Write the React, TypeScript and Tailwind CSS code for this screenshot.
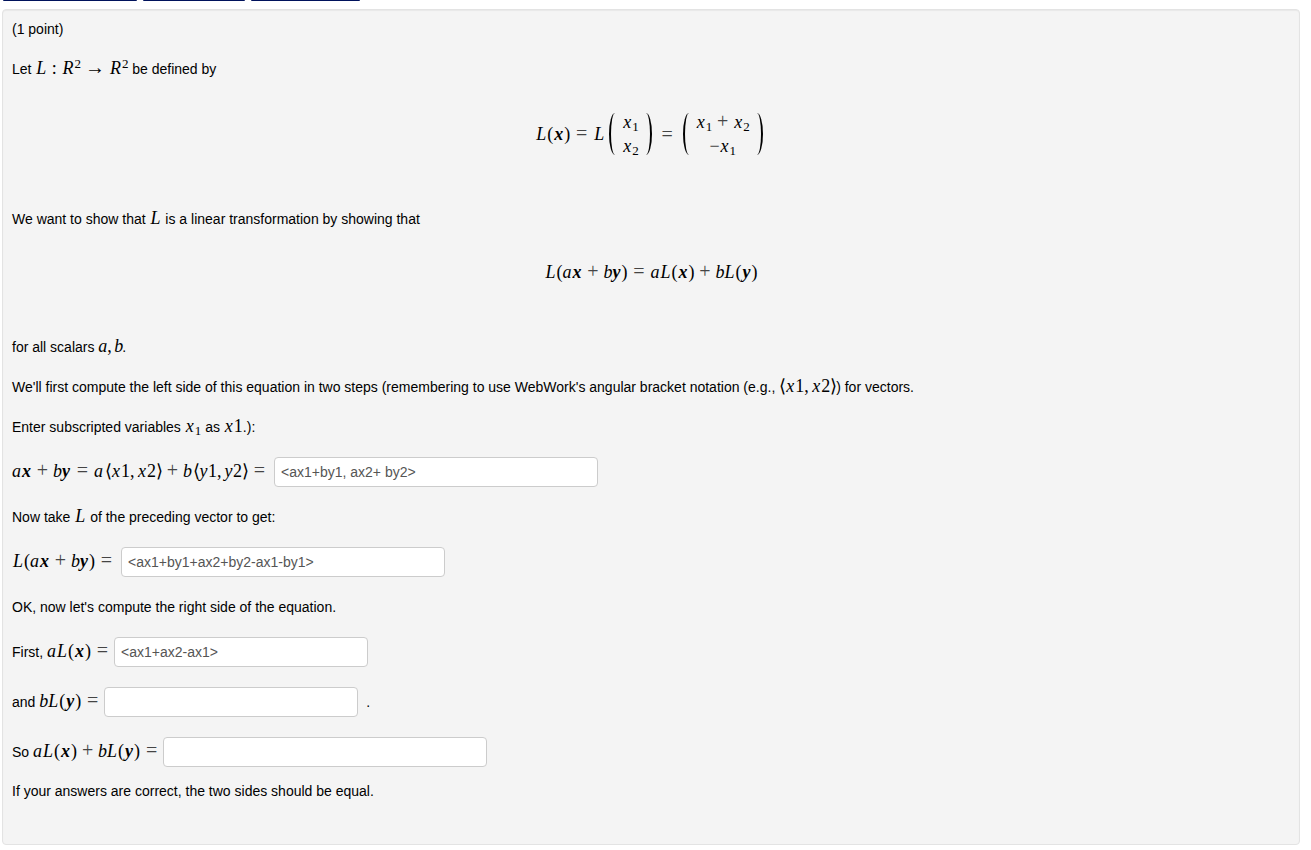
import { useState } from 'react';
import type { ReactNode } from 'react';

// Advance width of each letter, so formulas get textbook spacing
const LETTER: Record<string, string> = {
  L: 'w-3',
  R: 'w-[13px]',
  x: 'w-2.5',
  y: 'w-[9px]',
  a: 'w-[9px]',
  b: 'w-2',
};

const BOLD: Record<string, string> = {
  x: 'w-[11px]',
  y: 'w-2.5',
};

function Math({ children }: { children: ReactNode }) {
  return (
    <span className="font-['Liberation_Serif',serif] text-[18px] leading-0 whitespace-nowrap">{children}</span>
  );
}

function V({ children }: { children: string }) {
  return <i className={`inline-block text-center ${LETTER[children]}`}>{children}</i>;
}

function B({ children }: { children: string }) {
  return <b className={`inline-block text-center italic ${BOLD[children]}`}>{children}</b>;
}

function Op({ children }: { children: string }) {
  return <span className="inline-block w-[21px] text-center text-[20px] text-[#444]">{children}</span>;
}

function Eq() {
  return <span className="inline-block w-[23px] text-center text-[20px] text-[#444]">=</span>;
}

function Sub({ children }: { children: string }) {
  return <sub className="text-[13px]">{children}</sub>;
}

function Comma() {
  return <span className="inline-block w-[7px]">,</span>;
}

function Thin() {
  return <span className="inline-block w-0.5" />;
}

function Angle({ name }: { name: string }) {
  return (
    <>
      <span className="inline-flex w-1.5 justify-center">⟨</span>
      <V>{name}</V>1<Comma /><V>{name}</V>2
      <span className="inline-flex w-1.5 justify-center">⟩</span>
    </>
  );
}

// Column vector between tall delimiters
function Vector({ top, bottom }: { top: ReactNode; bottom: ReactNode }) {
  return (
    <span className="mx-1 flex items-center gap-px">
      <span className="h-[42px] w-3 rounded-l-[100%] border-l-2 border-black" />
      <span className="flex flex-col text-center leading-6">
        <span>{top}</span>
        <span>{bottom}</span>
      </span>
      <span className="h-[42px] w-3 rounded-r-[100%] border-r-2 border-black" />
    </span>
  );
}

interface AnswerProps {
  id: string;
  label: ReactNode;
  initial?: string;
  short?: boolean;
  spaced?: boolean;
  after?: string;
}

function Answer({ id, label, initial = '', short, spaced, after }: AnswerProps) {
  const [value, setValue] = useState(initial);
  return (
    <div className="flex items-center">
      <label htmlFor={id} className={spaced ? 'mr-[3px]' : ''}>{label}</label>
      <input
        id={id}
        type="text"
        value={value}
        onChange={e => setValue(e.target.value)}
        className={`h-[30px] rounded border border-[#ccc] bg-white px-1.5 text-[#555] outline-none focus:border-sky-400 ${short ? 'w-[254px]' : 'w-[324px]'}`}
      />
      {after && <span className="ml-2">{after}</span>}
    </div>
  );
}

export default function App() {
  return (
    <div className="min-h-screen bg-white pr-[11px] pl-0.5 font-['Liberation_Sans',Arial,sans-serif] text-sm leading-5 text-black">
      {/* Bottom edge of the toolbar buttons */}
      <div className="flex gap-1.5 pl-px" aria-hidden="true">
        <div className="h-px w-[134px] rounded-b bg-[#00125c]" />
        <div className="h-px w-[102px] rounded-b bg-[#00125c]" />
        <div className="h-px w-[109px] rounded-b bg-[#00125c]" />
      </div>

      <main className="mt-2 rounded border border-[#e3e3e3] bg-[#f4f4f4] px-[9px] pt-[9px] pb-[43px] shadow-[inset_0_1px_1px_rgba(0,0,0,0.05)]">
        <div className="flex flex-col gap-5">
          <p>(1 point)</p>
          <p>
            Let{' '}
            <Math>
              <V>L</V> : <V>R</V><sup className="text-[13px]">2</sup>
              <span className="inline-block w-7 text-center text-[20px]">→</span>
              <V>R</V><sup className="text-[13px]">2</sup>
            </Math>{' '}
            be defined by
          </p>
        </div>

        <div className="flex items-center justify-center pt-[30px] pb-[51px] font-['Liberation_Serif',serif] text-[18px] leading-6">
          <span><V>L</V>(<B>x</B>)<Eq /><V>L</V></span>
          <Vector
            top={<><V>x</V><Sub>1</Sub></>}
            bottom={<><V>x</V><Sub>2</Sub></>}
          />
          <Eq />
          <Vector
            top={<><V>x</V><Sub>1</Sub><Op>+</Op><V>x</V><Sub>2</Sub></>}
            bottom={<><span className="text-[#444]">−</span><V>x</V><Sub>1</Sub></>}
          />
        </div>

        <p>
          We want to show that <Math><V>L</V></Math> is a linear transformation by showing that
        </p>

        <p className="pt-[34px] pb-[54px] text-center">
          <Math>
            <V>L</V>(<V>a</V><B>x</B><Op>+</Op><V>b</V><B>y</B>)<Eq />
            <V>a</V><V>L</V>(<B>x</B>)<Op>+</Op><V>b</V><V>L</V>(<B>y</B>)
          </Math>
        </p>

        <div className="flex flex-col gap-5">
          <p>
            for all scalars <Math><V>a</V><Comma /><V>b</V></Math>.
          </p>
          <p>
            We'll first compute the left side of this equation in two steps (remembering to use WebWork's angular
            bracket notation (e.g., <Math><Angle name="x" /></Math>) for vectors.
          </p>
          <p>
            Enter subscripted variables <Math><V>x</V><Sub>1</Sub></Math> as <Math><V>x</V>1</Math>.):
          </p>
          <Answer
            id="left-steps"
            spaced
            initial="<ax1+by1, ax2+ by2>"
            label={
              <Math>
                <V>a</V><B>x</B><Op>+</Op><V>b</V><B>y</B><Eq />
                <V>a</V><Thin /><Angle name="x" /><Op>+</Op><V>b</V><Thin /><Angle name="y" /><Eq />
              </Math>
            }
          />
          <p>
            Now take <Math><V>L</V></Math> of the preceding vector to get:
          </p>
          <Answer
            id="left-side"
            spaced
            initial="<ax1+by1+ax2+by2-ax1-by1>"
            label={<Math><V>L</V>(<V>a</V><B>x</B><Op>+</Op><V>b</V><B>y</B>)<Eq /></Math>}
          />
          <p>OK, now let's compute the right side of the equation.</p>
          <Answer
            id="right-first"
            short
            initial="<ax1+ax2-ax1>"
            label={<>First, <Math><V>a</V><V>L</V>(<B>x</B>)<Eq /></Math></>}
          />
          <Answer
            id="right-second"
            short
            after="."
            label={<>and <Math><V>b</V><V>L</V>(<B>y</B>)<Eq /></Math></>}
          />
          <Answer
            id="right-sum"
            label={<>So <Math><V>a</V><V>L</V>(<B>x</B>)<Op>+</Op><V>b</V><V>L</V>(<B>y</B>)<Eq /></Math></>}
          />
        </div>

        <p className="mt-3.5">If your answers are correct, the two sides should be equal.</p>
      </main>
    </div>
  );
}
